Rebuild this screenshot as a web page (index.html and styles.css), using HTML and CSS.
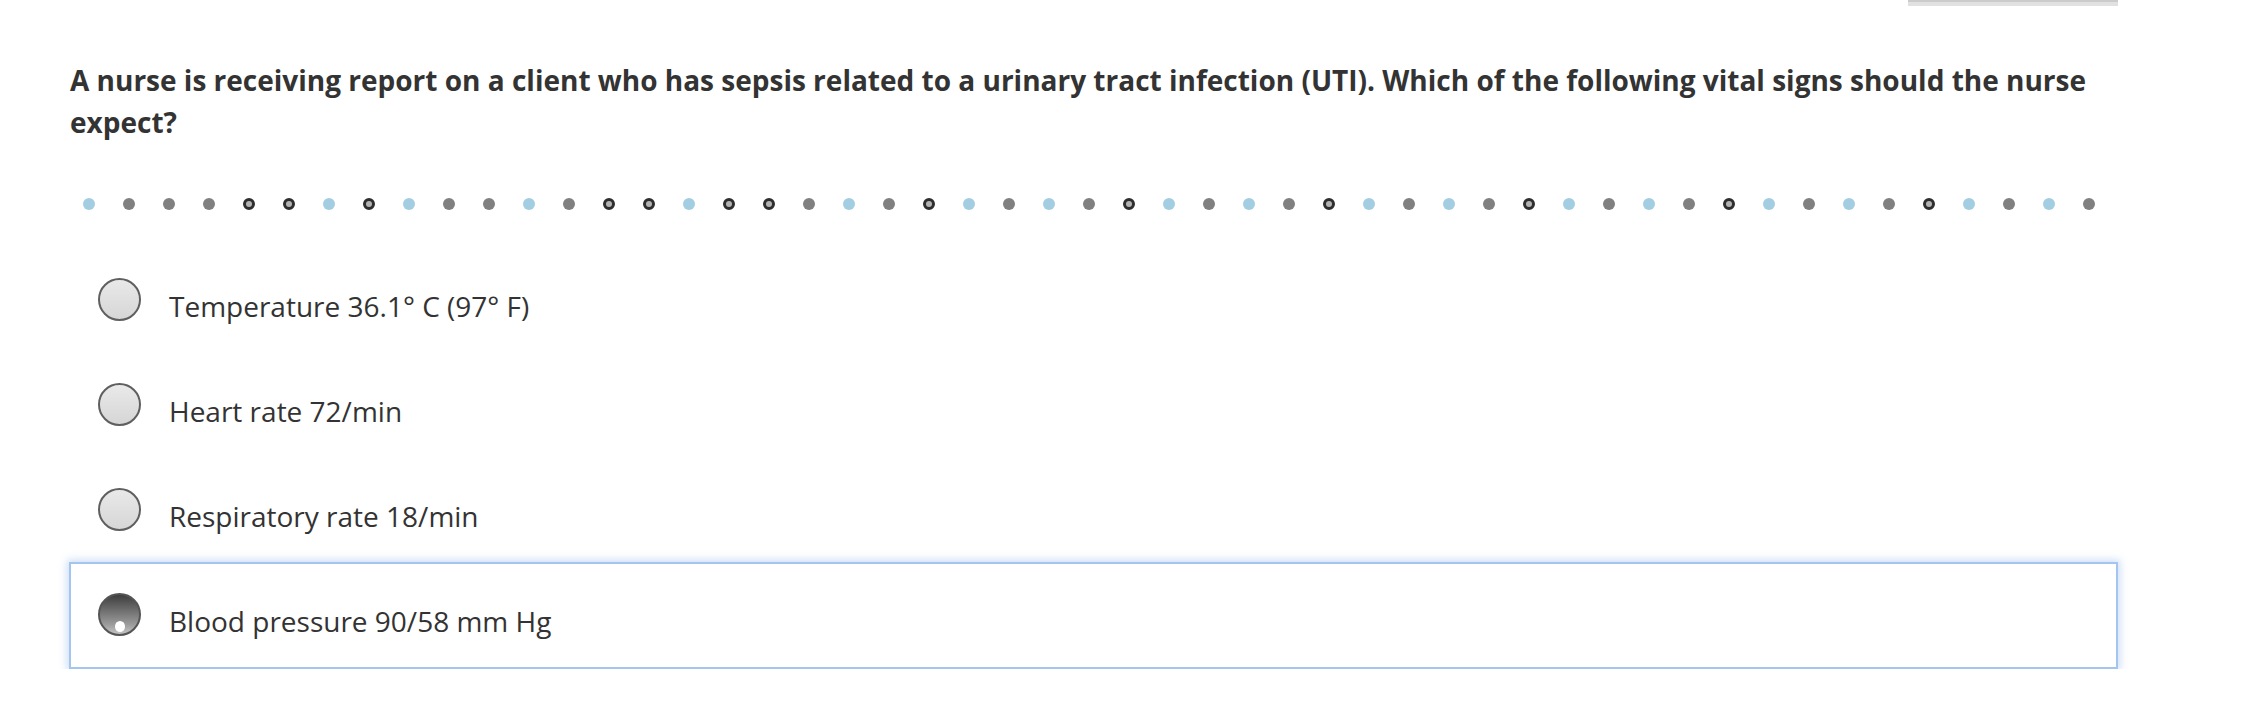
FILE: index.html
```html
<!DOCTYPE html>
<html lang="en">
<head>
<meta charset="utf-8">
<title>Question</title>
<link rel="stylesheet" href="styles.css">
</head>
<body>
<div class="page">
  <div class="topbar"></div>
  <p class="question">A nurse is receiving report on a client who has sepsis related to a urinary tract infection (UTI). Which of the following vital signs should the nurse expect?</p>
  <div class="dots">
    <span class="dot b"></span><span class="dot g"></span><span class="dot g"></span><span class="dot g"></span><span class="dot r"></span><span class="dot r"></span><span class="dot b"></span><span class="dot r"></span><span class="dot b"></span><span class="dot g"></span>
    <span class="dot g"></span><span class="dot b"></span><span class="dot g"></span><span class="dot r"></span><span class="dot r"></span><span class="dot b"></span><span class="dot r"></span><span class="dot r"></span><span class="dot g"></span><span class="dot b"></span>
    <span class="dot g"></span><span class="dot r"></span><span class="dot b"></span><span class="dot g"></span><span class="dot b"></span><span class="dot g"></span><span class="dot r"></span><span class="dot b"></span><span class="dot g"></span><span class="dot b"></span>
    <span class="dot g"></span><span class="dot r"></span><span class="dot b"></span><span class="dot g"></span><span class="dot b"></span><span class="dot g"></span><span class="dot r"></span><span class="dot b"></span><span class="dot g"></span><span class="dot b"></span>
    <span class="dot g"></span><span class="dot r"></span><span class="dot b"></span><span class="dot g"></span><span class="dot b"></span><span class="dot g"></span><span class="dot r"></span><span class="dot b"></span><span class="dot g"></span><span class="dot b"></span>
    <span class="dot g"></span>
  </div>
  <div class="options">
    <label class="option"><span class="radio"></span><span class="opt-text">Temperature 36.1° C (97° F)</span></label>
    <label class="option"><span class="radio"></span><span class="opt-text">Heart rate 72/min</span></label>
    <label class="option"><span class="radio"></span><span class="opt-text">Respiratory rate 18/min</span></label>
    <label class="option selected"><span class="radio checked"></span><span class="opt-text">Blood pressure 90/58 mm Hg</span></label>
  </div>
</div>
</body>
</html>
```
FILE: styles.css
```css
html, body {
  margin: 0;
  padding: 0;
  background: #fff;
}
body {
  font-family: "Open Sans", "Liberation Sans", sans-serif;
  color: #333;
}
.page {
  width: 2049px;
  margin-left: 69px;
  display: flex;
  flex-direction: column;
}
.topbar {
  align-self: flex-end;
  width: 210px;
  height: 4px;
  background: #e1e1e1;
  border-top: 2px solid #cbcbcb;
}
.question {
  margin: 53px 0 0 1px;
  font-size: 28px;
  font-weight: 700;
  line-height: 42px;
  color: #333;
}
.dots {
  margin: 55px 0 0 14px;
  display: flex;
  gap: 28px;
  height: 12px;
}
.dot {
  flex: none;
  width: 12px;
  height: 12px;
  border-radius: 50%;
  box-sizing: border-box;
}
.dot.b { background: #a3cee2; }
.dot.g { background: #808080; }
.dot.r { background: #b3b3b3; border: 3px solid #2e2e2e; }
.options {
  margin-top: 37px;
  display: flex;
  flex-direction: column;
}
.option {
  height: 105px;
  box-sizing: border-box;
  border: 2px solid transparent;
  padding-left: 27px;
  display: flex;
  align-items: center;
  gap: 28px;
}
.option.selected {
  height: 107px;
  padding-bottom: 2px;
  border-color: #a3c5f0;
  box-shadow: 0 0 8px 2px rgba(140, 180, 235, 0.45);
}
.radio {
  flex: none;
  width: 43px;
  height: 43px;
  box-sizing: border-box;
  border-radius: 50%;
  border: 2px solid #5f5f5f;
  background: linear-gradient(#e9e9e9, #d6d6d6);
  position: relative;
}
.radio.checked {
  border-color: #555;
  background: linear-gradient(#3e3e3e, #9a9a9a 75%, #c4c4c4);
}
.radio.checked::after {
  content: "";
  position: absolute;
  left: 50%;
  top: 26px;
  width: 10px;
  height: 11px;
  margin-left: -5px;
  border-radius: 50%;
  background: #fff;
}
.opt-text {
  font-size: 28px;
  line-height: 38px;
  padding-top: 13px;
  color: #333;
}
```
